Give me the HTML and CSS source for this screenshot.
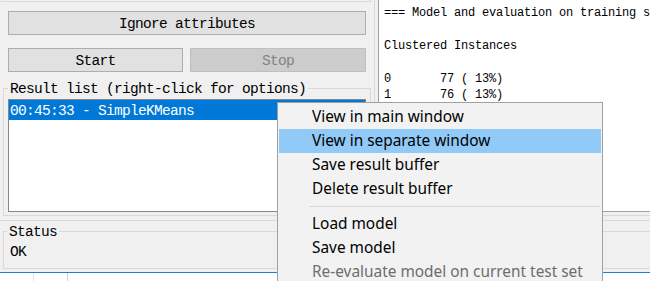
FILE: index.html
```html
<!DOCTYPE html>
<html>
<head>
<meta charset="utf-8">
<link rel="stylesheet" href="styles.css">
</head>
<body>
<div class="app">
  <div class="content">
    <div class="left">
      <div class="top-box"></div>
      <button class="btn wide">Ignore attributes</button>
      <div class="btn-row">
        <button class="btn start">Start</button>
        <button class="btn stop" disabled>Stop</button>
      </div>
      <fieldset class="group results">
        <legend>Result list (right-click for options)</legend>
        <div class="list">
          <div class="list-item selected">00:45:33 - SimpleKMeans</div>
        </div>
      </fieldset>
    </div>
    <div class="right">
<pre class="output">=== Model and evaluation on training set ===

Clustered Instances

0       77 ( 13%)
1       76 ( 13%)</pre>
    </div>
  </div>
  <fieldset class="group status">
    <legend>Status</legend>
    <div class="status-text">OK</div>
  </fieldset>
  <div class="taskbar">
    <div class="cell c1"></div>
    <div class="cell c2"></div>
    <div class="cell rest"></div>
  </div>
  <div class="menu">
    <div class="item">View in main window</div>
    <div class="item hover">View in separate window</div>
    <div class="item">Save result buffer</div>
    <div class="item">Delete result buffer</div>
    <div class="sep"></div>
    <div class="item">Load model</div>
    <div class="item">Save model</div>
    <div class="item disabled">Re-evaluate model on current test set</div>
  </div>
</div>
</body>
</html>
```
FILE: styles.css
```css
html, body {
  margin: 0;
  padding: 0;
}
body {
  width: 650px;
  height: 281px;
  overflow: hidden;
  background: #f0f0f0;
  font-family: "Liberation Mono", monospace;
  font-size: 14.5px;
  letter-spacing: -0.7px;
  color: #000;
}
.app {
  position: relative;
  height: 281px;
  display: flex;
  flex-direction: column;
}
.content {
  display: flex;
  flex: none;
  height: 216px;
  padding-bottom: 4px;
  border-bottom: 1px solid #d9d9d9;
}
.left {
  width: 371px;
  flex: none;
  display: flex;
  flex-direction: column;
}
.top-box {
  flex: none;
  height: 1px;
  width: 368px;
  margin-left: 1px;
  border: 1px solid #d9d9d9;
  border-top: none;
}
.btn {
  font: inherit;
  letter-spacing: inherit;
  color: #000;
  margin: 0;
  padding: 2px 0 0 0;
  height: 24px;
  box-sizing: border-box;
  border: 1px solid #adadad;
  background: #e1e1e1;
  display: flex;
  align-items: center;
  justify-content: center;
  flex: none;
}
.btn.wide {
  margin: 9px 0 0 8px;
  width: 358px;
}
.btn-row {
  display: flex;
  gap: 7px;
  margin: 13px 0 0 8px;
}
.btn.start {
  width: 175px;
}
.btn.stop {
  width: 176px;
  background: #cccccc;
  border-color: #bfbfbf;
  color: #838383;
}
.group {
  margin: 0;
  border: 1px solid #d9d9d9;
  min-width: 0;
  box-sizing: border-box;
}
.group legend {
  padding: 2px 2px 0 2px;
  line-height: 16px;
}
.results {
  margin: 7px 0 0 3px;
  width: 368px;
  padding: 2px 4px 3px 4px;
}
.list {
  height: 113px;
  box-sizing: border-box;
  border: 1px solid #828790;
  background: #fff;
}
.list-item {
  height: 20px;
  box-sizing: border-box;
  padding: 3px 0 0 1px;
  line-height: 17px;
  white-space: nowrap;
}
.list-item.selected {
  background: #0078d7;
  color: #fff;
}
.right {
  flex: 1;
  min-width: 0;
  margin-left: 3px;
  border-left: 1px solid #d9d9d9;
  border-bottom: 1px solid #d9d9d9;
  padding: 0 0 3px 3px;
  overflow: hidden;
}
.output {
  margin: 0;
  height: 212px;
  box-sizing: border-box;
  border-left: 1px solid #a0a0a0;
  border-bottom: 1px solid #a0a0a0;
  background: #fff;
  font-family: "Liberation Mono", monospace;
  font-size: 12px;
  line-height: 16.5px;
  letter-spacing: -0.2px;
  padding: 4.5px 0 0 5px;
  white-space: pre;
  overflow: hidden;
  color: #000;
}
.status {
  flex: none;
  margin: 1px -20px 0 3px;
  padding: 4px 6px 8px 6px;
}
.status legend {
  margin-left: -3px;
}
.status-text {
  line-height: 16px;
}
.taskbar {
  flex: none;
  margin-top: 3px;
  height: 9px;
  box-sizing: border-box;
  border-top: 1px solid #1c7fd6;
  background: #fff;
  display: flex;
}
.cell {
  height: 100%;
}
.c1 {
  width: 33px;
  border-right: 1px solid #e3e3e3;
}
.c2 {
  width: 33px;
  border-right: 1px solid #d0d0d0;
}
.rest {
  flex: 1;
}
.menu {
  position: absolute;
  left: 277px;
  top: 102px;
  width: 326px;
  box-sizing: border-box;
  border: 1px solid #a0a0a0;
  background: #f2f2f2;
  padding: 2px 1px;
  font-family: "Noto Sans", "Open Sans", sans-serif;
  font-size: 15.4px;
  letter-spacing: 0;
  color: #000;
}
.item {
  height: 24px;
  line-height: 24px;
  padding-left: 33px;
  white-space: nowrap;
}
.item.hover {
  background: #91c9f7;
}
.item.disabled {
  color: #6d6d6d;
}
.sep {
  height: 1px;
  background: #d7d7d7;
  margin: 5px 1px 5px 30px;
}
```
